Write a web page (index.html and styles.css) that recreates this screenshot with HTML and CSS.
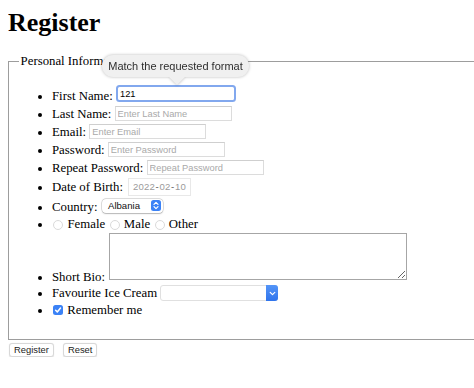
FILE: index.html
```html
<!DOCTYPE html>
<html>
	<head>
		<meta charset="utf-8" />
		<title>Register</title>
		<link rel="stylesheet" href="styles.css">
	</head>
	<body>
		<h1>Register</h1>

		<form class="register-form">
			<fieldset class="personal">
				<legend>Personal Information</legend>
				<ul class="fields">
					<li>First Name: <input type="text" class="text-input focused" value="121"></li>
					<li>Last Name: <input type="text" class="text-input" placeholder="Enter Last Name"></li>
					<li>Email: <input type="text" class="text-input" placeholder="Enter Email"></li>
					<li>Password: <input type="password" class="text-input" placeholder="Enter Password"></li>
					<li>Repeat Password: <input type="password" class="text-input" placeholder="Repeat Password"></li>
					<li class="row-tall">Date of Birth: <span class="date-input">2022<i>-</i>02<i>-</i>10</span></li>
					<li class="row-tall">Country: <span class="select-box country"><span>Albania</span><span class="select-btn"><svg width="6" height="9" viewBox="0 0 6 9"><path d="M1 3.4 L3 1.4 L5 3.4 M1 5.6 L3 7.6 L5 5.6" fill="none" stroke="#fff" stroke-width="1.2" stroke-linecap="round" stroke-linejoin="round"/></svg></span></span></li>
					<li class="row-radio"><input type="radio" name="gender" class="radio"> Female <input type="radio" name="gender" class="radio"> Male <input type="radio" name="gender" class="radio"> Other</li>
					<li class="row-bio"><span class="bio-wrap"><label>Short Bio:</label><textarea class="bio"></textarea></span></li>
					<li class="row-short">Favourite Ice Cream <span class="select-box ice"><span class="select-btn"><svg width="7" height="5" viewBox="0 0 7 5"><path d="M1.2 1.3 L3.5 3.6 L5.8 1.3" fill="none" stroke="#fff" stroke-width="1.2" stroke-linecap="round" stroke-linejoin="round"/></svg></span></span></li>
					<li class="row-short"><span class="checkbox"><svg width="10" height="10" viewBox="0 0 10 10"><path d="M2.6 5.2 L4.3 6.9 L7.5 3.1" fill="none" stroke="#fff" stroke-width="1.5" stroke-linecap="round" stroke-linejoin="round"/></svg></span> Remember me</li>
				</ul>
			</fieldset>
			<div class="actions">
				<button type="submit">Register</button>
				<button type="reset">Reset</button>
			</div>
		</form>

		<!-- validation bubble over the first field -->
		<div class="tooltip">Match the requested format</div>
	</body>
</html>
```

FILE: styles.css
```css
html {
	overflow: hidden;
}
body {
	margin: 8px 0 8px 8px;
	font-family: "Liberation Serif", "Times New Roman", serif;
	font-size: 12.8px;
	color: #000;
	background: #fff;
}
h1 {
	font-size: 26px;
	margin: 0 0 16px;
}
/* the box runs on past the right edge of the window */
.personal {
	margin: 0;
	padding: 4.5px 9.6px 8px;
	border: 1px solid #9d9d9d;
	border-right: none;
}
.personal legend {
	padding: 0 2px;
}
.fields {
	margin: 13.6px 0 12.8px;
	padding-left: 33.4px;
	line-height: 18px;
}
.fields .row-tall {
	line-height: 20px;
}
.fields .row-radio {
	line-height: 14px;
}
.fields .row-bio {
	line-height: 14.7px;
}
.fields .row-short {
	line-height: 16.6px;
}
.text-input {
	box-sizing: border-box;
	width: 117px;
	height: 15px;
	margin: 1.1px 0 0;
	padding: 0 2px;
	border: 1px solid #dcdcdc;
	border-top-color: #cfcfcf;
	font-family: "Liberation Sans", Arial, sans-serif;
	font-size: 9.3px;
	line-height: 13px;
	color: #000;
	vertical-align: top;
	outline: none;
	background: #fff;
}
.text-input::placeholder {
	color: #a9a9a9;
}
.text-input.focused {
	width: 120px;
	height: 17px;
	margin-top: -1.7px;
	border: 2px solid #82a8ee;
	border-radius: 3.5px;
	line-height: 13px;
}
.date-input {
	display: inline-block;
	box-sizing: border-box;
	width: 63px;
	height: 18px;
	margin: 0.6px 0 0 1.7px;
	padding-left: 4px;
	border: 1px solid #e8e8e8;
	font-family: "Liberation Sans", Arial, sans-serif;
	font-size: 9.6px;
	letter-spacing: 0.2px;
	line-height: 16px;
	color: #9b9b9b;
	vertical-align: top;
}
.date-input i {
	font-style: normal;
	color: #555;
	padding: 0 0.5px;
}
.select-box {
	display: inline-flex;
	box-sizing: border-box;
	align-items: center;
	vertical-align: top;
	background: #fff;
	font-family: "Liberation Sans", Arial, sans-serif;
	font-size: 9.6px;
	color: #111;
}
.country {
	width: 61px;
	height: 14px;
	margin: 1.6px 0 0 1.3px;
	padding: 0 1.5px 0 6px;
	justify-content: space-between;
	border-radius: 4px;
	box-shadow: 0 0 0 0.5px rgba(0,0,0,0.22), 0 0.5px 1.5px rgba(0,0,0,0.2);
	line-height: 14px;
}
.country .select-btn {
	display: flex;
	align-items: center;
	justify-content: center;
	width: 10px;
	height: 11px;
	border-radius: 2.5px;
	background: #3b82f6;
}
.ice {
	width: 118px;
	height: 16px;
	margin-top: 0.3px;
	justify-content: flex-end;
	border: 1px solid #e0e0e0;
	border-radius: 3px;
}
.ice .select-btn {
	display: flex;
	align-items: center;
	justify-content: center;
	width: 12px;
	height: 16px;
	margin: -1px -1px -1px 0;
	border-radius: 0 3px 3px 0;
	background: linear-gradient(#5495f8, #2f74ec);
}
.radio {
	appearance: none;
	box-sizing: border-box;
	width: 10px;
	height: 10px;
	margin: 2.6px 0.8px 0 1.5px;
	border: 1px solid #dadada;
	border-radius: 50%;
	background: #fff;
	vertical-align: top;
}
.bio-wrap {
	display: inline-flex;
	align-items: flex-end;
	gap: 4px;
}
.bio {
	box-sizing: border-box;
	width: 298px;
	height: 47px;
	margin: 2.3px 0 4.7px;
	padding: 2px;
	border: 1px solid #a6a6a6;
	font-family: "Liberation Sans", Arial, sans-serif;
	font-size: 9.6px;
}
.checkbox {
	display: inline-block;
	width: 10px;
	height: 10px;
	margin: 3.6px 1px 0;
	border-radius: 2.5px;
	background: #3b82f6;
	vertical-align: top;
}
.checkbox svg {
	display: block;
}
.actions {
	display: flex;
	gap: 9px;
	margin-top: 3px;
	padding-left: 1px;
}
.actions button {
	box-sizing: border-box;
	height: 13.5px;
	padding: 0 4px;
	border: 1px solid #d8d8d8;
	border-radius: 3px;
	background: #fff;
	box-shadow: 0 0.5px 1px rgba(0,0,0,0.12);
	font-family: "Liberation Sans", Arial, sans-serif;
	font-size: 9.4px;
	line-height: 11px;
	color: #222;
}
.tooltip {
	position: absolute;
	left: 102px;
	top: 55px;
	width: 147px;
	height: 22px;
	box-sizing: border-box;
	border-radius: 11px;
	background: #f0f0f0;
	filter: drop-shadow(0 0.5px 1.5px rgba(0,0,0,0.28));
	font-family: "Liberation Sans", Arial, sans-serif;
	font-size: 11px;
	line-height: 22px;
	color: #2e2e2e;
	text-align: center;
}
.tooltip::after {
	content: "";
	position: absolute;
	left: 67px;
	top: 100%;
	border-left: 8px solid transparent;
	border-right: 8px solid transparent;
	border-top: 8px solid #f0f0f0;
}
```
